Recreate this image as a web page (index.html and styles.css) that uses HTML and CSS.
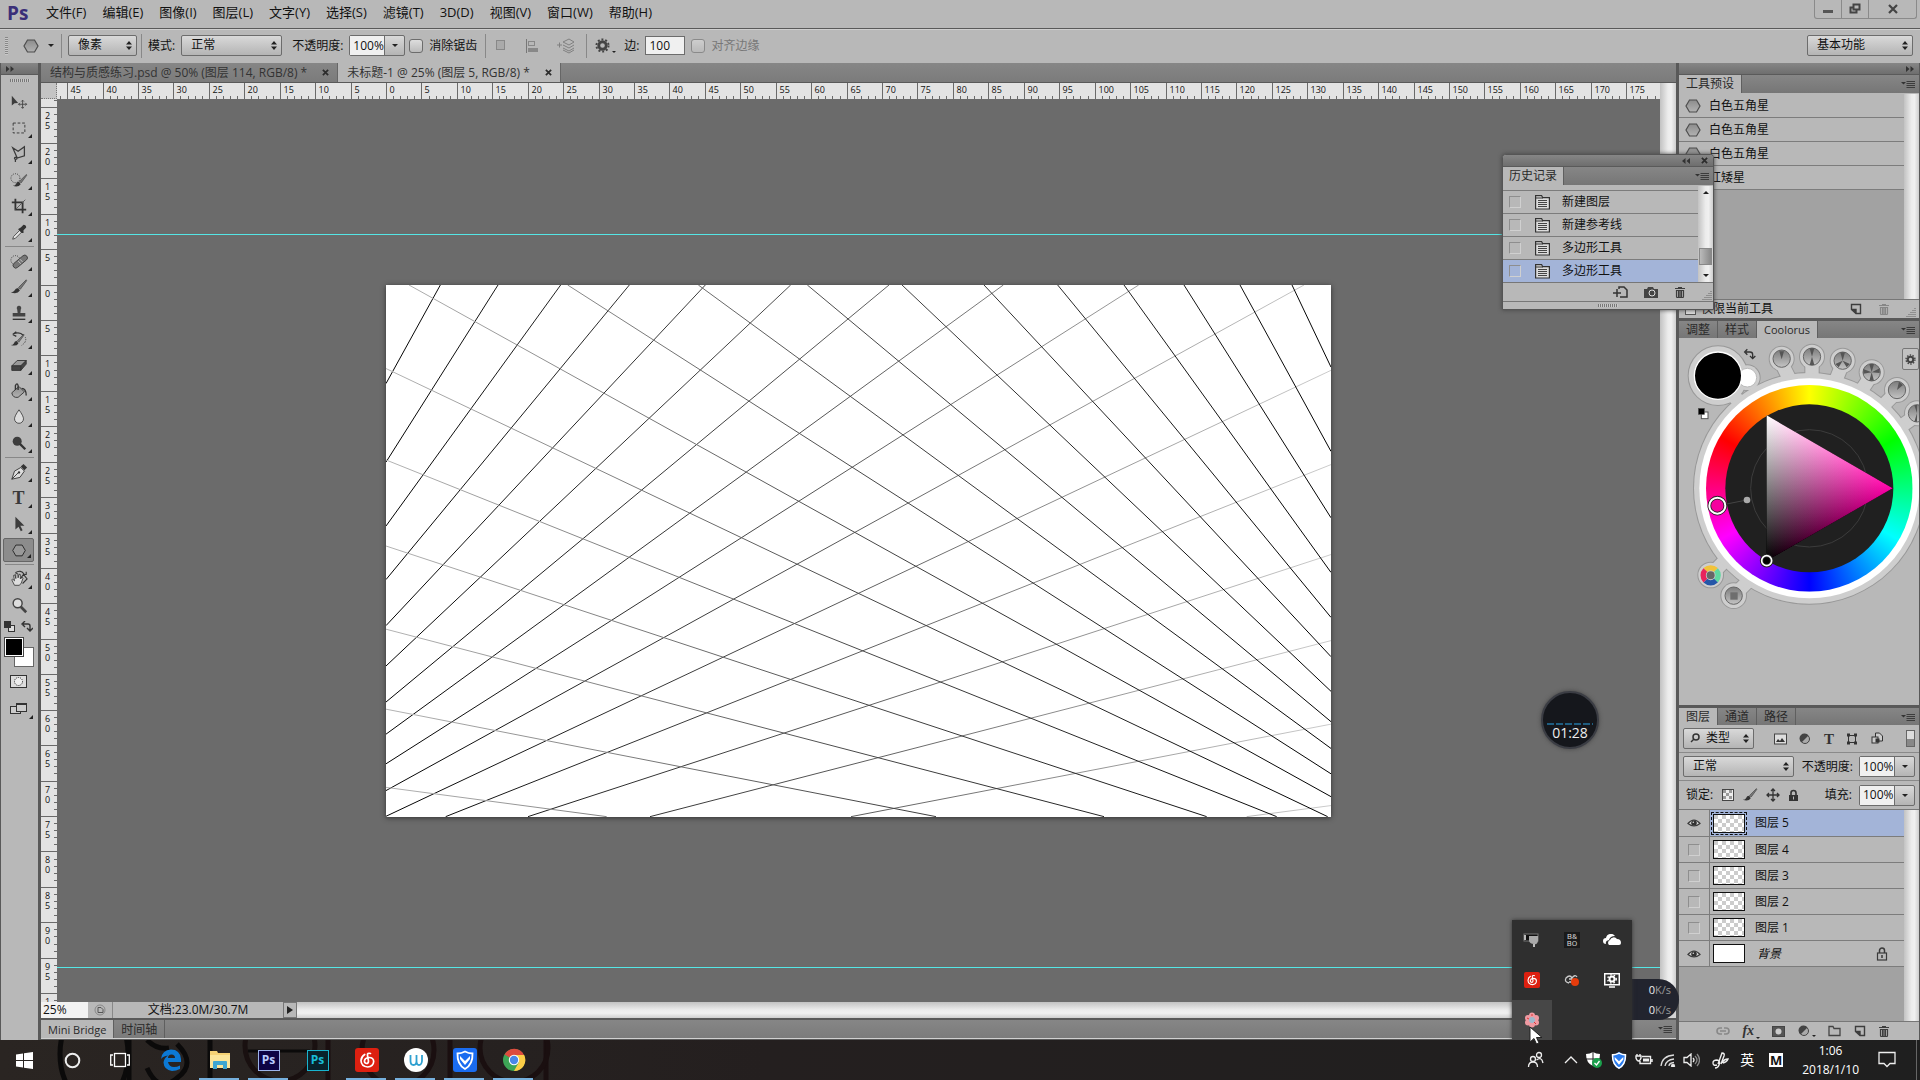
FILE: index.html
```html
<!DOCTYPE html>
<html lang="zh-CN">
<head>
<meta charset="utf-8">
<title>未标题-1 @ 25%</title>
<link rel="stylesheet" href="styles.css">
</head>
<body>
<svg class="defs" aria-hidden="true">
  <defs>
    <linearGradient id="metal" x1="0" y1="0" x2="0" y2="1"><stop offset="0" stop-color="#8c8c8c"/><stop offset="1" stop-color="#b2b2b2"/></linearGradient>
    <symbol id="hex" viewBox="0 0 16 14"><path d="M4.500 1h7L15 7l-3.500 6h-7L1 7z" fill="url(#metal)" stroke="#4d4d4d" stroke-width="1.200"/></symbol>
    <symbol id="flyout" viewBox="0 0 14 10"><path d="M0 2h5L2.500 4.500z" fill="#333"/><path d="M5.500 1.500H14M5.500 3.500H14M5.500 5.500H14M5.500 7.500H14" stroke="#3c3c3c"/></symbol>
    <symbol id="dbl" viewBox="0 0 8 6"><path d="M0 0l3.500 3L0 6zM4.500 0L8 3 4.500 6z" fill="#333"/></symbol>
    <symbol id="cross" viewBox="0 0 8 8"><path d="M1 1l6 6M7 1L1 7" stroke="#2c2c2c" stroke-width="2"/></symbol>
    <symbol id="size" viewBox="0 0 10 10"><path d="M9 0v10M7 2v8M5 4v6M3 6v4M1 8v2" stroke="#666" stroke-dasharray="1 1"/></symbol>
    <symbol id="trash" viewBox="0 0 12 12"><path d="M1 2.500h10M4 1.500h4M2 4.500h8M2.500 4v6.500q0 1 1 1h5q1 0 1-1V4M4.500 5v6M6 5v6M7.500 5v6" stroke="#3d3d3d" fill="none" stroke-width="1.200"/></symbol>
    <symbol id="newdoc" viewBox="0 0 12 12"><path d="M1.500 1.500h9v9H6L1.500 6.500zM1.500 6.500H6v4" fill="none" stroke="#3d3d3d" stroke-width="1.400"/><path d="M2 6.500h4v4z" fill="#3d3d3d"/></symbol>
    <symbol id="gear" viewBox="0 0 16 16"><circle cx="8" cy="8" r="4" fill="none" stroke="#444" stroke-width="3"/><circle cx="8" cy="8" r="6.500" fill="none" stroke="#444" stroke-width="2" stroke-dasharray="2.100 2"/></symbol>
    <symbol id="eye" viewBox="0 0 14 10"><path d="M1 5.500Q7-1.500 13 5.500 7 10.500 1 5.500z" fill="#d6d6d6" stroke="#3a3a3a" stroke-width="1.200"/><circle cx="7" cy="5" r="2.800" fill="#333"/><circle cx="6.300" cy="4.200" r=".8" fill="#ddd"/></symbol>
    <symbol id="lock" viewBox="0 0 12 14"><path d="M3.500 6V3.500a2.500 2.500 0 0 1 5 0V6" fill="none" stroke="#3a3a3a" stroke-width="1.500"/><rect x="1.500" y="6" width="9" height="7" fill="none" stroke="#3a3a3a" stroke-width="1.200"/><path d="M6 8v3" stroke="#3a3a3a" stroke-width="1.500"/></symbol>
    <symbol id="step" viewBox="0 0 15 16"><path d="M.6 15V1.600h6l1 2h6.800V15z" fill="#dcdcdc" stroke="#333" stroke-width="1.200"/><path d="M1 4h7" stroke="#333"/><path d="M3 6.500h9M3 8.500h9M3 10.500h9M3 12.500h9" stroke="#444"/></symbol>
    <symbol id="half" viewBox="0 0 12 12"><circle cx="6" cy="6" r="4.500" fill="#aaa" stroke="#444"/><path d="M2.500 9.500A5 5 0 1 1 9.500 2.500z" fill="#444"/></symbol>
    <symbol id="brush" viewBox="0 0 20 20"><path d="M18 2L9.500 10.500l2 2L18.500 3z" fill="#777" stroke="#444" stroke-width=".8"/><path d="M9 11q-3 0-4 3-1 2-4 2 7 2.500 10-2z" fill="#333"/></symbol>
    <symbol id="netease" viewBox="0 0 24 24"><rect width="24" height="24" rx="3" fill="#dd2010"/><path d="M15.500 5.500q-3.500-1-3 2l1 5.500q0 2.500-2 2.500-2.500-.500-2-3 .5-2.500 4-3 5-.200 5.200 4-.400 5-6 5.500-6.500-.600-6.700-6.500.300-4 3.700-6" fill="none" stroke="#fff" stroke-width="1.700" stroke-linecap="round"/></symbol>
    <symbol id="guard" viewBox="0 0 24 24"><path d="M4.500 5.500q4 0 7.500-2 3.500 2 7.500 2 .5 11-7.500 15.500-8-4.500-7.500-15.500z" fill="none" stroke="#fff" stroke-width="1.800"/><path d="M7 8l5 5 5-5v3l-5 6-5-6z" fill="#fff"/></symbol>
  </defs>
</svg>

<header class="menubar">
  <strong class="logo">Ps</strong>
  <nav class="menus">
    <button>文件(F)</button><button>编辑(E)</button><button>图像(I)</button><button>图层(L)</button><button>文字(Y)</button><button>选择(S)</button><button>滤镜(T)</button><button>3D(D)</button><button>视图(V)</button><button>窗口(W)</button><button>帮助(H)</button>
  </nav>
  <div class="winbtns">
    <button aria-label="最小化"><svg width="12" height="12"><rect x="1" y="7" width="10" height="3" fill="#555"/></svg></button>
    <button aria-label="还原"><svg width="12" height="12" fill="none" stroke="#444" stroke-width="2"><rect x="4.500" y="1.500" width="6" height="5"/><path d="M4 4.500H1.500v5h6V7"/></svg></button>
    <button class="wide" aria-label="关闭"><svg width="12" height="10"><path d="M2 1l8 8M10 1L2 9" stroke="#444" stroke-width="2.200"/></svg></button>
  </div>
</header>

<section class="options">
  <i class="grip-v"></i>
  <button class="tool-now" aria-label="多边形工具"><svg width="16" height="14"><use href="#hex"/></svg><i class="caret"></i></button>
  <i class="sep"></i>
  <select class="sel w-s" aria-label="工具模式"><option>像素</option></select>
  <i class="sep"></i>
  <label class="lbl" for="mode">模式:</label>
  <select id="mode" class="sel w-m"><option>正常</option></select>
  <label class="lbl lead" for="op">不透明度:</label>
  <span class="combo"><input id="op" value="100%"><button aria-label="不透明度滑块"><i class="caret"></i></button></span>
  <label class="check"><input type="checkbox">消除锯齿</label>
  <i class="sep"></i>
  <div class="paths">
    <svg width="14" height="14"><rect x="2.500" y="1.500" width="8" height="9" fill="#aaa" stroke="#888"/></svg>
    <svg width="14" height="14"><path d="M1.500 0v14" stroke="#777"/><rect x="3.500" y="2.500" width="6" height="4" fill="none" stroke="#888"/><rect x="3" y="9" width="10" height="4" fill="#888"/></svg>
    <svg width="20" height="16" fill="none" stroke="#808080"><path d="M1 7h5M3.500 4.500v5"/><path d="M7 4l6-3 5 3-5 3zM7 7l6 3 5-3M7 10l6 3 5-3M7 12l6 3 5-3"/></svg>
  </div>
  <i class="sep"></i>
  <button class="gearbtn" aria-label="几何选项"><svg width="15" height="15"><use href="#gear"/></svg><i class="caret tiny"></i></button>
  <label class="lbl" for="sides">边:</label>
  <input id="sides" class="num" value="100">
  <label class="check dim"><input type="checkbox" disabled>对齐边缘</label>
  <select class="sel w-ws" aria-label="工作区"><option>基本功能</option></select>
</section>

<main class="work">
  <aside class="tools">
    <div class="dockhead left"><svg width="8" height="6"><use href="#dbl"/></svg></div>
    <i class="grip-h"></i>
    <div class="group">
      <button aria-label="移动"><svg viewBox="0 0 20 20"><path d="M2 3v11l3-2.500 4-.5z" fill="#3c3c3c"/><path d="M14 8v9M9.500 12.500h9M12.500 9.500L14 8l1.500 1.500M12.500 15.500L14 17l1.500-1.500M11 11l-1.500 1.500L11 14M17 11l1.500 1.500L17 14" stroke="#444" fill="none"/></svg></button>
      <button class="more" aria-label="矩形选框"><svg viewBox="0 0 20 20"><rect x="3.500" y="4.500" width="13" height="11" fill="none" stroke="#333" stroke-dasharray="3 2"/></svg></button>
      <button class="more" aria-label="多边形套索"><svg viewBox="0 0 20 20"><path d="M3 3l6 4 7-5v10l-8 2.500zM8 14q-3-1-3 1 1 2 3 0M6 16v3" fill="none" stroke="#3a3a3a" stroke-width="1.400"/></svg></button>
      <button class="more" aria-label="快速选择"><svg viewBox="0 0 20 20"><circle cx="6" cy="8" r="5" fill="none" stroke="#222" stroke-dasharray="1 1.500"/><use href="#brush" x="2" y="2" width="18" height="18"/></svg></button>
      <button class="more" aria-label="裁剪"><svg viewBox="0 0 20 20"><path d="M6 2v12h12M2 6h12v12" fill="none" stroke="#333" stroke-width="2"/><path d="M6 14L17 3" stroke="#555"/></svg></button>
      <button class="more" aria-label="吸管"><svg viewBox="0 0 20 20"><path d="M3 18l1-3 7-7 2 2-7 7z" fill="#e8e8e8" stroke="#444"/><path d="M10 6l2-1 3-3q3 0 3 3l-3 3 0 3-2 0-4-4z" fill="#333"/></svg></button>
    </div>
    <hr>
    <div class="group">
      <button class="more" aria-label="修复画笔"><svg viewBox="0 0 20 20"><circle cx="6" cy="9" r="5" fill="none" stroke="#222" stroke-dasharray="1 1.500"/><rect x="2" y="8" width="19" height="6" rx="3" transform="rotate(-40 11 11)" fill="#777" stroke="#444"/><path d="M9 10l3 3M11 8l3 3" stroke="#ccc"/></svg></button>
      <button class="more" aria-label="画笔"><svg viewBox="0 0 20 20"><use href="#brush" width="20" height="20"/></svg></button>
      <button class="more" aria-label="仿制图章"><svg viewBox="0 0 20 20"><path d="M10 2a2.500 2.500 0 0 1 2 4l-.5 4H17v4H3v-4h5.500L8 6a2.500 2.500 0 0 1 2-4z" fill="#444"/><path d="M3 17h14" stroke="#333" stroke-width="1.500"/></svg></button>
      <button class="more" aria-label="历史记录画笔"><svg viewBox="0 0 20 20"><path d="M3 5q7-4 12 1M3 5l4-3M3 5l4 2" stroke="#333" stroke-width="1.500" fill="none"/><use href="#brush" y="3" width="17" height="17"/><path d="M17 8q2 5-4 9" fill="none" stroke="#333" stroke-dasharray="1 1"/></svg></button>
      <button class="more" aria-label="橡皮擦"><svg viewBox="0 0 20 20"><path d="M8 5h10l-6 6H2z" fill="#999" stroke="#333"/><path d="M2 11h10v5H2zM12 11l6-6v4l-6 7z" fill="#444" stroke="#333"/></svg></button>
      <button class="more" aria-label="油漆桶"><svg viewBox="0 0 20 20"><path d="M2 12l8-7 6 6-7 6q-6 1-7-5z" fill="url(#metal)" stroke="#333"/><path d="M6 9V4q2-4 3 0v5M13 7q5 0 5 8" fill="none" stroke="#333" stroke-width="1.500"/></svg></button>
      <button class="more" aria-label="模糊"><svg viewBox="0 0 20 20"><path d="M10 2q5 7 5 10a5 5 0 0 1-10 0q0-3 5-10z" fill="#ddd" stroke="#444"/></svg></button>
      <button class="more" aria-label="减淡"><svg viewBox="0 0 20 20"><circle cx="8" cy="8" r="5" fill="#3d3d3d"/><path d="M11 11l6 6" stroke="#333" stroke-width="2.500"/></svg></button>
    </div>
    <hr>
    <div class="group">
      <button class="more" aria-label="钢笔"><svg viewBox="0 0 20 20"><path d="M2 18L5 9l7-4 4 4-5 7zM2 18l7-7" fill="#ddd" stroke="#333"/><circle cx="10" cy="10.500" r="1.300" fill="#333"/><path d="M12 4l3-3 4 4-3 3z" fill="#333"/></svg></button>
      <button class="more letter" aria-label="文字">T</button>
      <button class="more" aria-label="路径选择"><svg viewBox="0 0 20 20"><path d="M6 2v14l3.500-3 2.500 5 2-1-2.500-5H16z" fill="#3c3c3c"/></svg></button>
      <button class="more on" aria-label="多边形"><svg viewBox="0 0 20 20"><path d="M6.500 4.500h7l3.500 6-3.500 6h-7l-3.500-6z" fill="#999" stroke="#222"/></svg></button>
    </div>
    <hr>
    <div class="group">
      <button class="more" aria-label="抓手"><svg viewBox="0 0 20 20"><path d="M5 17l-3-6 1-1 2 2-1-6 1.500-.5 1 4V4l2-.3.5 5 1-4 1.500.3v5l2-2 1 1q-2 7-4 8z" fill="#ddd" stroke="#333" stroke-width=".9"/><path d="M6 3q6-4 10 2M12 9l3-4 4 5-5 5M16 5l2 0 0-3" fill="none" stroke="#333" stroke-width="1.200"/></svg></button>
      <button aria-label="缩放"><svg viewBox="0 0 20 20"><circle cx="8.500" cy="8" r="5" fill="#ddd" stroke="#444" stroke-width="1.600"/><path d="M12 12l6 6" stroke="#444" stroke-width="3"/></svg></button>
    </div>
    <div class="mini">
      <svg width="11" height="11"><rect x="4.500" y="4.500" width="6" height="6" fill="#ddd" stroke="#333"/><rect width="7" height="7" fill="#333"/></svg>
      <svg width="12" height="11"><path d="M2 3h5q2 0 2 2v4M4 0L1 3l3 3M6 7l3 3 3-3" fill="none" stroke="#333" stroke-width="1.400"/></svg>
    </div>
    <div class="swatches"><button class="bg" aria-label="背景色"></button><button class="fg" aria-label="前景色"></button></div>
    <div class="extras">
      <button class="extra" aria-label="快速蒙版"><svg width="17" height="13"><rect x=".5" y=".5" width="16" height="12" fill="#ddd" stroke="#333"/><circle cx="8.500" cy="6.500" r="4" fill="#eee" stroke="#222" stroke-dasharray="1 1"/></svg></button>
      <button class="extra more" aria-label="屏幕模式"><svg width="18" height="14" fill="#ccc" stroke="#333"><rect x=".5" y="4.500" width="10" height="7"/><rect x="6.500" y="1.500" width="10" height="8"/><path d="M6 2h11" stroke-width="2"/></svg></button>
    </div>
  </aside>

  <section class="doc">
    <div class="doctabs">
      <button class="doctab">结构与质感练习.psd @ 50% (图层 114, RGB/8) *<svg width="7" height="7"><use href="#cross"/></svg></button>
      <button class="doctab on">未标题-1 @ 25% (图层 5, RGB/8) *<svg width="7" height="7"><use href="#cross"/></svg></button>
    </div>
    <div class="frame">
      <div class="corner"></div>
      <svg class="ruler-h" id="rulerH"></svg>
      <div class="scroll-v"></div>
      <svg class="ruler-v" id="rulerV"></svg>
      <div class="viewport">
        <svg class="artboard" id="art" viewBox="48 42 2835 1490" preserveAspectRatio="none">
          <defs>
            <linearGradient id="toRight" gradientUnits="userSpaceOnUse" x1="48" y1="0" x2="2883" y2="0"><stop offset="0" stop-color="#000"/><stop offset=".5" stop-color="#5c5c5c"/><stop offset="1" stop-color="#ccc"/></linearGradient>
            <linearGradient id="toLeft" gradientUnits="userSpaceOnUse" x1="48" y1="0" x2="2883" y2="0"><stop offset="0" stop-color="#b4b4b4"/><stop offset=".5" stop-color="#484848"/><stop offset="1" stop-color="#000"/></linearGradient>
          </defs>
          <rect x="48" y="42" width="2835" height="1490" fill="#fff"/>
          <path stroke="url(#toRight)" d="M48 318L211 42M48 538L384 42M48 717L572 42M48 867L778 42M48 996L1006 42M48 1109L1262 42M48 1210L1557 42M48 1300L1900 42M48 1383L2306 42M48 1458L2802 42M48 1530L2883 281M227 1531L2883 545M474 1531L2883 797M840 1531L2883 1038M1443 1531L2883 1272M2630 1531L2883 1500"/>
          <path stroke="url(#toLeft)" d="M48 1449L710 1531M48 1230L1698 1531M48 1006L2202 1531M48 773L2510 1531M48 532L2720 1531M48 276L2873 1531M117 42L2883 1475M593 42L2883 1411M985 42L2883 1340M1312 42L2883 1265M1596 42L2883 1180M1842 42L2883 1083M2063 42L2883 973M2262 42L2883 847M2442 42L2883 694M2610 42L2883 508M2766 42L2883 272"/>
        </svg>
        <i class="guide g1"></i><i class="guide g2"></i>
      </div>
    </div>
    <div class="status">
      <input value="25%" aria-label="缩放比例">
      <span class="sticon"><svg width="12" height="12" fill="none" stroke="#888"><circle cx="6" cy="6" r="5"/><path d="M4 3.500h3l2 2v3H4z" stroke="#555"/></svg></span>
      <span class="stinfo">文档:23.0M/30.7M</span>
      <button aria-label="更多"><svg width="7" height="8"><path d="M0 0l6 4-6 4z" fill="#222"/></svg></button>
      <div class="scroll-h"></div><i class="scorner"></i>
    </div>
    <div class="bottomtabs">
      <button class="tab on latin">Mini Bridge</button><button class="tab">时间轴</button>
      <svg class="fly" width="14" height="10"><use href="#flyout"/></svg>
    </div>
  </section>

  <aside class="dock">
    <section class="panel presets">
      <div class="dockhead right"><svg width="8" height="6"><use href="#dbl"/></svg></div>
      <div class="tabs"><button class="tab on">工具预设</button><svg class="fly" width="14" height="10"><use href="#flyout"/></svg></div>
      <div class="listwrap">
        <ul class="presetlist">
          <li><svg width="16" height="14"><use href="#hex"/></svg>白色五角星</li>
          <li><svg width="16" height="14"><use href="#hex"/></svg>白色五角星</li>
          <li><svg width="16" height="14"><use href="#hex"/></svg>白色五角星</li>
          <li><svg width="16" height="14"><use href="#hex"/></svg>红矮星</li>
        </ul>
        <div class="scroll-v"></div>
      </div>
      <div class="foot">
        <label class="only"><input type="checkbox" checked>仅限当前工具</label>
        <svg width="12" height="12"><use href="#newdoc"/></svg><svg width="12" height="12" opacity=".4"><use href="#trash"/></svg><svg class="rs" width="10" height="10"><use href="#size"/></svg>
      </div>
    </section>

    <section class="panel color">
      <div class="tabs"><button class="tab">调整</button><button class="tab">样式</button><button class="tab on latin">Coolorus</button><svg class="fly" width="14" height="10"><use href="#flyout"/></svg></div>
      <div class="wheelbox">
        <svg class="wheel" viewBox="57 84 720 1101">
          <defs>
            <g id="blobs"><circle cx="448" cy="535" r="346"/><circle cx="174" cy="197" r="88"/><circle cx="262" cy="203" r="37"/><circle cx="365" cy="146" r="36"/><circle cx="456" cy="140" r="36"/><circle cx="548" cy="152" r="36"/><circle cx="635" cy="187" r="36"/><circle cx="711" cy="240" r="36"/><circle cx="771" cy="310" r="36"/><circle cx="152" cy="795" r="37"/><circle cx="221" cy="857" r="37"/></g>
            <path id="necks" d="M200 240L300 330M365 160l30 60M456 150v60M548 160l-24 60M635 195l-40 60M711 245l-60 60M771 315l-70 50M152 795l60-60M221 857l60-60" fill="none"/>
            <linearGradient id="hueG" gradientUnits="userSpaceOnUse" x1="320" y1="0" x2="698" y2="0"><stop stop-color="#000"/><stop offset="1" stop-color="#ff00a8"/></linearGradient>
            <linearGradient id="whiteG" gradientUnits="userSpaceOnUse" x1="320" y1="316" x2="508" y2="644"><stop stop-color="#fff"/><stop offset="1" stop-color="#000"/></linearGradient>
            <linearGradient id="knobG" x1="0" y1="0" x2="0" y2="1"><stop stop-color="#7c7c7c"/><stop offset="1" stop-color="#c4c4c4"/></linearGradient>
          </defs>
          <use href="#necks" stroke="#989898" stroke-width="46"/><use href="#blobs" class="blob-line"/>
          <use href="#necks" stroke="#cecece" stroke-width="40"/><use href="#blobs" class="blob-fill"/>
          <circle cx="448" cy="535" r="330" fill="#fff"/>
          <foreignObject x="138" y="225" width="620" height="620"><div class="hue"></div></foreignObject>
          <circle cx="448" cy="535" r="252" fill="#202020"/>
          <circle cx="448" cy="535" r="176" fill="none" stroke="#3c3c3c" stroke-width="3"/>
          <g class="tri"><path d="M320 316L698 535 320 752z" fill="url(#hueG)"/><path class="plus" d="M320 316L698 535 320 752z" fill="url(#whiteG)"/></g>
          <path d="M200 582l60-12" stroke="#444" stroke-width="3"/><circle cx="261" cy="570" r="10" fill="#aaa"/>
          <circle cx="172" cy="587" r="24" fill="#f5009f" stroke="#222" stroke-width="11"/><circle cx="172" cy="587" r="24" fill="none" stroke="#fff" stroke-width="6"/>
          <circle cx="320" cy="752" r="15" fill="#000" stroke="#222" stroke-width="11"/><circle cx="320" cy="752" r="15" fill="none" stroke="#fff" stroke-width="5"/>
          <circle cx="262" cy="203" r="28" fill="#fff" stroke="#bbb" stroke-width="3"/>
          <circle cx="174" cy="197" r="71" fill="#000" stroke="#fff" stroke-width="4"/>
          <path d="M258 126h12q8 0 8 8v10M262 118l-8 8 8 8M270 138l8 8 8-8" fill="none" stroke="#333" stroke-width="4"/>
          <rect x="124" y="306" width="20" height="20" fill="#fff" stroke="#555" stroke-width="3"/><rect x="115" y="295" width="18" height="18" fill="#000" stroke="#555" stroke-width="2"/>
          <g fill="url(#knobG)" stroke="#666" stroke-width="3"><circle cx="365" cy="146" r="26"/><circle cx="456" cy="140" r="26"/><circle cx="548" cy="152" r="26"/><circle cx="635" cy="187" r="26"/><circle cx="711" cy="240" r="26"/><circle cx="771" cy="310" r="26"/><circle cx="221" cy="857" r="26"/></g>
          <path fill="#555" d="M365 148l-7-24h14zM456 140l-7-25h14zM456 140l-7 25h14zM548 152l-7-25h14zM548 152l-22 10 10 10zM548 152l22 10-10 10zM635 187l-7-25h14zM635 187l-7 25h14zM635 187l-25-10 0 14zM635 187l24-12 0 14zM711 240l6-25 12 10zM771 310l-8-25h8zM771 310l-8 25h8z"/>
          <rect x="211" y="847" width="22" height="22" fill="#6e6e6e"/>
          <circle cx="152" cy="796" r="12" fill="#666"/>
          <g fill="none" stroke-width="16"><path d="M136 780a23 23 0 0 1 32 0" stroke="#f2c33a"/><path d="M168 780a23 23 0 0 1 0 32" stroke="#5fd8a0"/><path d="M168 812a23 23 0 0 1-32 0" stroke="#2456a8"/><path d="M136 812a23 23 0 0 1 0-32" stroke="#e8235c"/></g>
        </svg>
        <button class="cgear" aria-label="设置"><svg width="11" height="11"><use href="#gear"/></svg></button>
      </div>
    </section>

    <section class="panel layers">
      <div class="tabs"><button class="tab on">图层</button><button class="tab">通道</button><button class="tab">路径</button><svg class="fly" width="14" height="10"><use href="#flyout"/></svg></div>
      <div class="lrow filter">
        <span class="kind"><svg width="10" height="10" fill="none" stroke="#333" stroke-width="1.500"><circle cx="6" cy="4" r="3"/><path d="M4 6L1 9"/></svg><select class="sel w-k" aria-label="过滤类型"><option>类型</option></select></span>
        <span class="ficons">
          <svg width="13" height="12"><rect x=".5" y="1" width="12" height="10" fill="#ddd" stroke="#444"/><path d="M2 9l2-3 2 2 2-3 3 4z" fill="#333"/></svg>
          <svg width="12" height="12"><use href="#half"/></svg>
          <b>T</b>
          <svg width="12" height="12" fill="none" stroke="#333"><rect x="2.500" y="2.500" width="7" height="7"/><path d="M1 2h3M8 2h3M1 10h3M8 10h3" stroke-width="3"/></svg>
          <svg width="12" height="13" fill="#ccc" stroke="#333"><path d="M4.500 1h4l3 3v5h-7z"/><rect x="1" y="5" width="6" height="6"/><rect x="5" y="7" width="3" height="3" fill="#333"/></svg>
        </span>
        <i class="toggle"></i>
      </div>
      <div class="lrow">
        <select class="sel w-b" aria-label="混合模式"><option>正常</option></select>
        <label class="lbl push" for="lop">不透明度:</label><span class="combo"><input id="lop" value="100%"><button aria-label="滑块"><i class="caret"></i></button></span>
      </div>
      <div class="lrow locks">
        <span class="lbl">锁定:</span>
        <svg width="12" height="12"><rect x=".5" y=".5" width="11" height="11" fill="#eee" stroke="#444"/><path d="M1 1h3v3H1zM7 1h3v3H7zM4 4h3v3H4zM1 7h3v3H1zM7 7h3v3H7z" fill="#999"/></svg>
        <svg width="16" height="16"><use href="#brush"/></svg>
        <svg width="14" height="14" fill="none" stroke="#333" stroke-width="1.300"><path d="M7 1v12M1 7h12M5 3l2-2 2 2M5 11l2 2 2-2M3 5L1 7l2 2M11 5l2 2-2 2"/></svg>
        <svg width="11" height="13"><path d="M3 6V4a2.500 2.500 0 0 1 5 0v2" fill="none" stroke="#333" stroke-width="1.600"/><rect x="1" y="6" width="9" height="6" fill="#333"/><path d="M5.500 7.500v3" stroke="#bbb"/></svg>
        <label class="lbl push" for="fill">填充:</label><span class="combo"><input id="fill" value="100%"><button aria-label="滑块"><i class="caret"></i></button></span>
      </div>
      <div class="listwrap">
        <ul class="layerlist">
          <li class="on"><span class="vis"><svg width="14" height="10"><use href="#eye"/></svg></span><span class="thumb picked"></span>图层 5</li>
          <li><span class="vis"><i></i></span><span class="thumb"></span>图层 4</li>
          <li><span class="vis"><i></i></span><span class="thumb"></span>图层 3</li>
          <li><span class="vis"><i></i></span><span class="thumb"></span>图层 2</li>
          <li><span class="vis"><i></i></span><span class="thumb"></span>图层 1</li>
          <li><span class="vis"><svg width="14" height="10"><use href="#eye"/></svg></span><span class="thumb plain"></span><em>背景</em><svg class="lk" width="12" height="14"><use href="#lock"/></svg></li>
        </ul>
        <div class="scroll-v"></div>
      </div>
      <div class="foot lfoot">
        <svg width="14" height="12" fill="none" stroke="#888" stroke-width="1.600"><path d="M6 3H4a3 3 0 0 0 0 6h2M8 3h2a3 3 0 0 1 0 6H8M4 6h6"/></svg>
        <span class="fx">fx<i class="caret tiny"></i></span>
        <svg width="13" height="11"><rect x=".5" y=".5" width="12" height="10" fill="#555" stroke="#444"/><circle cx="6.500" cy="5.500" r="3" fill="#ccc"/></svg>
        <span class="fx"><svg width="12" height="12"><use href="#half"/></svg><i class="caret tiny"></i></span>
        <svg width="13" height="12"><path d="M1 10.500v-9h4l1 2h6v7z" fill="none" stroke="#444" stroke-width="1.300"/></svg>
        <svg width="12" height="12"><use href="#newdoc"/></svg>
        <svg width="12" height="12"><use href="#trash"/></svg>
      </div>
    </section>
  </aside>
</main>

<section class="history">
  <div class="dockhead right"><svg class="flip" width="8" height="6"><use href="#dbl"/></svg><svg width="7" height="7"><use href="#cross"/></svg></div>
  <div class="tabs"><button class="tab on">历史记录</button><svg class="fly" width="14" height="10"><use href="#flyout"/></svg></div>
  <div class="listwrap">
    <ul class="steps">
      <li><i></i><svg width="15" height="16"><use href="#step"/></svg>新建图层</li>
      <li><i></i><svg width="15" height="16"><use href="#step"/></svg>新建参考线</li>
      <li><i></i><svg width="15" height="16"><use href="#step"/></svg>多边形工具</li>
      <li class="on"><i></i><svg width="15" height="16"><use href="#step"/></svg>多边形工具</li>
    </ul>
    <div class="scroll-v bar"><i class="up"></i><i class="thumbbar"></i><i class="down"></i></div>
  </div>
  <div class="foot hfoot">
    <svg width="15" height="13" fill="none" stroke="#333" stroke-width="1.500"><path d="M0 7h8M4 3v8"/><path d="M6 3V1h5l3 3v7H7"/></svg>
    <svg width="14" height="11"><path d="M0 2h3l1-2h5l1 2h4v9H0z" fill="#444"/><circle cx="8" cy="6" r="3" fill="#444" stroke="#ddd"/></svg>
    <svg width="12" height="12"><use href="#trash"/></svg><svg class="rs" width="10" height="10"><use href="#size"/></svg>
  </div>
  <div class="hgrip"><i class="grip-h"></i></div>
</section>

<div class="timer"><svg width="50" height="6"><path d="M2 3h46" stroke="#1f5d80" stroke-width="2" stroke-dasharray="7 2"/></svg>01:28</div>
<div class="speed"><span><b>0</b>K/s</span><span><b>0</b>K/s</span></div>

<div class="traypop">
  <button aria-label="设备"><svg width="18" height="16"><rect x="1" y="2" width="14" height="7" fill="#111" stroke="#777"/><path d="M6 4h9v5q-1 4-4 3-4 0-5-3z" fill="#aaa"/><path d="M2 3v5M11 12v3" stroke="#bbb" stroke-width="2"/></svg></button>
  <button class="bb" aria-label="BB">B&amp;<br>BO</button>
  <button aria-label="OneDrive"><svg width="18" height="12"><path d="M3 10a3 3 0 0 1 0-6 5 5 0 0 1 9-2q-5 0-6 4-4 1-3 4z" fill="#fff"/><path d="M6 11a3 3 0 0 1 1-5 4 4 0 0 1 7-1q4 0 4 4 0 2-2 2z" fill="#fff"/></svg></button>
  <button aria-label="云音乐"><svg width="16" height="16"><use href="#netease"/></svg></button>
  <button aria-label="创意云"><svg width="16" height="14"><path d="M5 10Q0 9 2 5q4-4 6 0 3-4 5-1M5 6h3v3H5" fill="none" stroke="#ccc" stroke-width="1.300"/><circle cx="11" cy="9" r="4" fill="#e63c0c"/></svg></button>
  <button aria-label="显示设置"><svg width="16" height="15"><path d="M.7.7h14.600v11H.7zM5 14h6" fill="none" stroke="#fff" stroke-width="1.500"/><circle cx="8" cy="6" r="2.500" fill="none" stroke="#fff" stroke-width="2"/><circle cx="8" cy="6" r="4.200" fill="none" stroke="#fff" stroke-width="1.500" stroke-dasharray="1.500 2"/></svg></button>
  <button class="hot" aria-label="花"><svg width="16" height="16"><g fill="#ef9aa2"><circle cx="8" cy="3.500" r="3"/><circle cx="12" cy="6" r="3"/><circle cx="12" cy="10.500" r="3"/><circle cx="8" cy="12.500" r="3"/><circle cx="4" cy="10.500" r="3"/><circle cx="4" cy="6" r="3"/></g><circle cx="8" cy="8" r="3" fill="#9db8cc"/><path d="M8 2v2M12 12l-2-2M3 6l2 1" stroke="#d33"/></svg></button>
</div>
<svg class="cursor" width="14" height="20"><path d="M1 1v15l4-3.500 2.500 5.500 2.500-1-2.500-5.500H13z" fill="#fff" stroke="#222"/></svg>

<footer class="taskbar">
  <svg class="wall" fill="none" stroke="#0b0a0a" stroke-width="5"><ellipse cx="94" cy="14" rx="34" ry="50"/><path d="M129-10V50M147 0q10 10 22 8M147 28q12 26 30 10 20-14 0-34M210-5V45"/><circle cx="280" cy="6" r="35" stroke="#191010"/><path d="M248 11h62" stroke="#0b0a0a" stroke-width="3"/><path d="M328-5V45M450-5V45M546-5V45" stroke="#1a0f10"/><circle cx="398" cy="10" r="36" stroke="#1a0f10"/><circle cx="514" cy="8" r="34" stroke="#1a0f10"/></svg>
  <div class="syswrap">
    <button aria-label="开始"><svg width="17" height="17" fill="#fff"><path d="M0 2.500l7-1V8H0zM8 1.300L17 0v8H8zM0 9h7v6.500l-7-1zM8 9h9v8l-9-1.300z"/></svg></button>
    <button aria-label="Cortana"><svg width="17" height="17"><circle cx="8.500" cy="8.500" r="6.800" fill="none" stroke="#eee" stroke-width="2"/></svg></button>
    <button aria-label="任务视图"><svg width="20" height="16" fill="none" stroke="#fff" stroke-width="1.300"><rect x="4.500" y="1.500" width="11" height="13"/><path d="M3 3H.7v10H3M17 3h2.300v10H17"/></svg></button>
  </div>
  <button class="app" aria-label="Edge"><svg width="22" height="22"><path d="M1 10Q2 1 11 .5q9 0 10 9.500v3H8q1 5 6 5 3 0 6-1.500V20q-4 2-8 2-8-1-8.500-8.500Q4 9 8 6.500 3 7 1 10zM8 9h7q0-3.500-3.500-3.500T8 9z" fill="#0c79d4"/></svg></button>
  <button class="app open" aria-label="资源管理器"><svg width="22" height="20"><path d="M1 1h7l1 2h12v15H1z" fill="#f5d275"/><path d="M1 5h20v13H1z" fill="#fbe59a"/><path d="M4 19v-7q0-1 1-1h12q1 0 1 1v7h-4v-4H8v4z" fill="#3ea6d2"/></svg></button>
  <button class="app open" aria-label="Photoshop"><span class="psi">Ps</span></button>
  <button class="app" aria-label="Photoshop CC"><span class="psi cc">Ps</span></button>
  <button class="app open" aria-label="网易云音乐"><svg width="24" height="24"><use href="#netease"/></svg></button>
  <button class="app open" aria-label="微云"><svg width="24" height="24"><circle cx="12" cy="12" r="12" fill="#fff"/><path d="M6.500 7v6q0 4 3 4t3-4V7M12.500 13q0 4 2.500 4t3-4V7" fill="none" stroke="#2fa0d0" stroke-width="1.800"/></svg></button>
  <button class="app open" aria-label="电脑管家"><svg width="24" height="24"><rect width="24" height="24" rx="3" fill="#1a6cf0"/><use href="#guard" width="24" height="24"/></svg></button>
  <button class="app open" aria-label="Chrome"><svg width="24" height="24"><circle cx="12" cy="12" r="11" fill="#3da556"/><path d="M12 12L2.500 6.500A11 11 0 0 1 22 7z" fill="#dd4b3e"/><path d="M12 7h10.200A11 11 0 0 1 12 23l5-9z" fill="#fccd47"/><circle cx="12" cy="12" r="5.200" fill="#fff"/><circle cx="12" cy="12" r="4.200" fill="#4a87e8"/></svg></button>
  <div class="tray">
    <svg width="18" height="18" fill="none" stroke="#eee" stroke-width="1.300"><circle cx="6" cy="8" r="2.500"/><path d="M1.500 16q0-5 4.500-5t4.500 5"/><circle cx="12" cy="4" r="2.500"/><path d="M9.500 9q5-4 6.500 3"/></svg>
    <svg class="chev" width="14" height="8" fill="none" stroke="#eee" stroke-width="1.300"><path d="M1 7l6-6 6 6"/></svg>
    <svg width="18" height="18"><path d="M1 3q4 0 7-2 3 2 7 2 0 9-7 12Q1 12 1 3z" fill="#fff"/><path d="M8 1v14M1 8h14" stroke="#222"/><circle cx="12" cy="12" r="5" fill="#1ba04c"/><path d="M9.500 12l2 2 3-4" fill="none" stroke="#fff" stroke-width="1.300"/></svg>
    <svg width="18" height="18" viewBox="2 1 20 21"><path d="M4 5q5 0 8-3 3 3 8 3 1 12-8 17Q3 17 4 5z" fill="#2a7cf0"/><use href="#guard" width="24" height="24"/></svg>
    <svg width="18" height="14" fill="none" stroke="#eee" stroke-width="1.400"><path d="M7 3.500h8.500v7H5V8M17 6v3M1 3h5v2q-1 3-2.500 3T1 5zM2 1v2M5 1v2"/><rect x="8" y="5.500" width="6" height="3" fill="#eee" stroke="none"/></svg>
    <svg width="16" height="14" fill="none" stroke="#ddd" stroke-width="1.300"><path d="M1 13Q2 3 14 2M5 13q1-6 9-7M9 13q0-3 5-3.500"/><circle cx="13" cy="13" r="1.500" fill="#fff"/></svg>
    <svg width="17" height="14" fill="none" stroke="#eee" stroke-width="1.300"><path d="M1 4.500h3L8 1v12L4 9.500H1zM10 5q2 2 0 4"/><path d="M12 3q4 4 0 8M14 1q5 6 0 12" stroke="#888"/></svg>
    <svg class="pen" width="18" height="18" fill="none" stroke="#eee" stroke-width="1.400"><path d="M6 14q-4 1-4-2t4-3q4 1 2 5-1 3-4 3M7 13l4-11q3 0 2 3L10 13M11 12q2-4 6-4-1 3-5 4"/></svg>
    <span class="ime">英</span>
    <span class="m">M</span>
    <time class="clock">1:06<br>2018/1/10</time>
    <svg class="note" width="18" height="18"><path d="M1 1.500h16v11h-5l-3 3-3-3H1z" fill="none" stroke="#eee" stroke-width="1.300"/></svg>
    <i class="desk"></i>
  </div>
</footer>
<script src="script.js"></script>
</body>
</html>
```
FILE: styles.css
```css
* { box-sizing: border-box; }
body {
  margin: 0; height: 100vh; min-width: 1100px; display: flex; flex-direction: column; overflow: hidden; position: relative;
  background: #595959; color: #111;
  font: 12px/16px "Open Sans", "Noto Sans CJK SC", sans-serif;
}
button, input, select { font: inherit; color: inherit; margin: 0; padding: 0; border: 0; background: none; border-radius: 0; }
ul { list-style: none; margin: 0; padding: 0; }
svg { display: block; flex: none; }
i { display: block; flex: none; font-style: normal; }
.defs { position: absolute; width: 0; height: 0; }

/* menu bar */
.menubar { height: 28px; flex: none; display: flex; align-items: center; background: #b8b8b8; padding: 0 3px 2px 0; }
.logo { width: 38px; padding-left: 7px; font: bold 19px/24px "Open Sans", sans-serif; color: #3a2f78; }
.menus { display: flex; flex: 1; gap: 16px; padding-left: 8px; font-size: 13px; line-height: 20px; padding-bottom: 3px; white-space: nowrap; }
.winbtns { display: flex; align-self: flex-start; height: 19px; border: 1px solid #8a8a8a; border-top: 0; border-radius: 0 0 3px 3px; }
.winbtns button { width: 27px; display: grid; place-items: center; border-right: 1px solid #8a8a8a; }
.winbtns .wide { width: 47px; border: 0; }

/* option bar */
.options { height: 34px; flex: none; display: flex; align-items: center; margin-top: 1px; padding: 0 7px 2px 5px; background: #b8b8b8; border-top: 1px solid #cfcfcf; gap: 6px; white-space: nowrap; }
.grip-v { width: 3px; height: 18px; margin-right: 9px; background: repeating-linear-gradient(#888 0 1px, #c8c8c8 1px 2px); }
.tool-now { display: flex; align-items: center; gap: 9px; margin-right: 1px; }
.caret { width: 0; height: 0; border: 3px solid transparent; border-top-color: #222; border-bottom: 0; }
.caret.tiny { border-width: 2px; border-bottom: 0; align-self: flex-end; }
.sep { width: 1px; height: 24px; background: #888; }
.sel {
  height: 21px; appearance: none; border: 1px solid #6c6c6c; border-radius: 2px; padding: 0 0 1px 9px; font-size: 12px;
  background: url("data:image/svg+xml,%3Csvg xmlns='http://www.w3.org/2000/svg' width='6' height='9'%3E%3Cpath d='M0 3.500L3 0l3 3.500zM0 5.500L3 9l3-3.500z' fill='%23222'/%3E%3C/svg%3E") no-repeat right 4px center, linear-gradient(#d9d9d9, #b4b4b4);
}
.w-s { width: 69px; margin-right: -2px; } .w-m { width: 101px; } .w-ws { width: 106px; margin-left: auto; } .w-b { width: 111px; } .w-k { width: 71px; padding-left: 22px; }
.lead { margin-left: 4px; }
.combo { display: flex; height: 21px; border: 1px solid #6c6c6c; border-radius: 2px; background: linear-gradient(#d9d9d9, #b4b4b4); }
.combo input { width: 35px; background: #f0f0f0; padding-left: 3px; border-right: 1px solid #6c6c6c; }
.combo button { width: 19px; display: grid; place-items: center; }
.check { display: flex; align-items: center; gap: 6px; margin: 0 2px 0 -2px; }
.check input { appearance: none; width: 14px; height: 14px; border: 1px solid #6c6c6c; border-radius: 3px; background: linear-gradient(#ddd, #bbb); }
.dim { color: #777; margin-left: 0; }
.dim input { opacity: .6; }
.paths { display: flex; align-items: center; gap: 17px; margin: 0 4px 0 2px; }
.gearbtn { display: flex; gap: 2px; margin: 0 2px; }
.num { width: 40px; height: 19px; background: #f0f0f0; border: 1px solid #6c6c6c; padding-left: 3px; }

/* main split */
.work { flex: 1; min-height: 0; display: flex; gap: 3px; padding: 0 1px; }
.dockhead { height: 12px; flex: none; display: flex; align-items: center; gap: 11px; padding: 0 5px; background: linear-gradient(#868686, #6e6e6e); border-bottom: 1px solid #5a5a5a; }
.dockhead.right { justify-content: flex-end; }
.flip { transform: scaleX(-1); }

.tools { width: 37px; flex: none; background: #b8b8b8; display: flex; flex-direction: column; }
.grip-h { width: 20px; height: 3px; margin: 4px auto 7px; background: repeating-linear-gradient(90deg, #777 0 1px, #c8c8c8 1px 2px); }
.tools hr { width: 29px; height: 1px; border: 0; margin: 1px auto; background: #888; }
.group { display: flex; flex-direction: column; align-items: center; padding-right: 2px; }
.group button { width: 31px; height: 26px; display: grid; place-items: center; position: relative; }
.group svg { width: 18px; height: 18px; }
.group .on { background: #8c8c8c; border: 1px solid #666; border-radius: 2px; height: 24px; margin: 1px 0; }
.more::after { content: ""; position: absolute; right: 2px; bottom: 3px; border: 2px solid transparent; border-right-color: #222; border-bottom-color: #222; }
.letter { font: bold 18px/20px "Liberation Serif", serif; color: #3a3a3a; }
.mini { display: flex; justify-content: space-between; padding: 3px 5px 5px 3px; }
.swatches { display: grid; grid-template: 10px 10px 10px / 10px 10px 10px; padding-left: 3px; }
.fg { grid-area: 1 / 1 / 3 / 3; background: #000; border: 1px solid #444; box-shadow: inset 0 0 0 1px #fff; z-index: 1; }
.bg { grid-area: 2 / 2 / 4 / 4; background: #fff; border: 1px solid #666; }
.extras { display: flex; flex-direction: column; padding: 1px 3px 0 1px; }
.extra { height: 27px; display: grid; place-items: center; position: relative; }

/* document */
.doc { flex: 1; min-width: 0; display: flex; flex-direction: column; background: #595959; }
.doctabs { height: 19px; flex: none; display: flex; background: linear-gradient(#868686, #7b7b7b); white-space: nowrap; }
.doctab { display: flex; align-items: center; gap: 15px; padding: 0 8px 0 9px; color: #333; border-right: 1px solid #666; }
.doctab.on { background: #b8b8b8; }
.frame { flex: 1; min-height: 0; margin-top: 1px; display: grid; grid-template: 16px 1fr / 16px 1fr 16px; }
.corner { background: #c4c4c4; border: dotted #777; border-width: 0 1px 1px 0; }
.ruler-h, .ruler-v { width: 100%; height: 100%; min-width: 0; min-height: 0; background: #e3e3e3; overflow: hidden; }
.ruler-h text, .ruler-v text { font: 9px "Open Sans", sans-serif; fill: #111; }
.ruler-h line, .ruler-v line { stroke: #6a6a6a; }
.scroll-v { background: linear-gradient(90deg, #c2c2c2, #ececec 50%, #f0f0f0 70%, #cfcfcf); }
.frame .scroll-v { grid-area: 1 / 3 / 3 / 4; }
.ruler-v { grid-area: 2 / 1; }
.viewport { grid-area: 2 / 2; position: relative; background: #6b6b6b; display: grid; place-items: center; overflow: hidden; }
.artboard { width: 945px; height: 532px; box-shadow: 0 1px 5px #333; fill: none; }
.artboard path { vector-effect: non-scaling-stroke; stroke-width: 1; }
.guide { position: absolute; left: 0; right: 0; height: 1px; background: #55e6e6; }
.g1 { top: 135px; } .g2 { top: 868px; }
.status { height: 16px; flex: none; display: flex; background: #b8b8b8; }
.status input { width: 47px; background: #f2f2f2; padding-left: 2px; }
.sticon { width: 25px; display: grid; place-items: center; border-right: 1px solid #888; }
.stinfo { width: 170px; text-align: center; }
.status button { width: 14px; display: grid; place-items: center; border: 1px solid #777; }
.scroll-h { flex: 1; background: linear-gradient(#c2c2c2, #ececec 50%, #f0f0f0 70%, #cfcfcf); }
.scorner { width: 16px; background: #d4d4d4; }
.bottomtabs { height: 19px; flex: none; margin: 2px 0 1px; display: flex; background: linear-gradient(#868686, #7b7b7b); border-bottom: 1px solid #d0d0d0; }
.bottomtabs .tab { padding: 1px 7px 0; }

/* panels */
.dock { width: 240px; flex: none; display: flex; flex-direction: column; gap: 3px; }
.panel { display: flex; flex-direction: column; background: #b8b8b8; }
.tabs { height: 17px; flex: none; display: flex; background: linear-gradient(#868686, #767676); }
.tab { padding: 0 7px; border-right: 1px solid #5f5f5f; color: #2a2a2a; white-space: nowrap; line-height: 16px; }
.tab.on { background: #b8b8b8; }
.latin { font-size: 11px; }
.fly { margin: 5px 4px 0 auto; }
.presets { height: 255px; }
.presets .tabs { height: 18px; }
.color { height: 384px; }
.layers { flex: 1; min-height: 0; }
.listwrap { flex: 1; min-height: 0; display: flex; background: #a2a2a2; margin-top: 1px; }
.listwrap ul { flex: 1; min-width: 0; overflow: hidden; }
.listwrap .scroll-v { width: 15px; flex: none; }
.presetlist li { height: 24px; display: flex; align-items: center; gap: 8px; padding-left: 6px; background: #b8b8b8; border-bottom: 1px solid #7c7c7c; }
.foot { height: 19px; flex: none; display: flex; align-items: center; gap: 16px; border-top: 1px solid #777; padding-right: 3px; }
.only { display: flex; align-items: center; gap: 6px; margin: 0 auto 0 6px; }
.only input { width: 11px; height: 11px; margin-right: -1px; appearance: none; border: 1px solid #555; background: #ddd; }
.rs { align-self: flex-end; }

.wheelbox { position: relative; flex: 1; overflow: hidden; }
.wheel { width: 240px; height: 367px; }
.blob-line { fill: #989898; stroke: #989898; stroke-width: 6; }
.blob-fill { fill: #cecece; }
.hue { width: 620px; height: 620px; border-radius: 50%; background: conic-gradient(#ff0, #0f0, #0ff, #00f, #f0f, #f00, #ff0); }
.tri { isolation: isolate; }
.plus { mix-blend-mode: plus-lighter; }
.cgear { position: absolute; right: 0; top: 10px; width: 17px; height: 22px; display: grid; place-items: center; border: 1px solid #777; border-radius: 2px; background: #c2c2c2; }

.lrow { height: 28px; flex: none; display: flex; align-items: center; gap: 6px; padding: 0 4px; border-bottom: 1px solid #8a8a8a; white-space: nowrap; }
.push { margin-left: auto; }
.kind { position: relative; }
.kind svg { position: absolute; left: 7px; top: 5px; }
.ficons { flex: 1; display: flex; justify-content: space-between; align-items: center; padding: 0 17px 0 14px; }
.ficons b { font: bold 15px/14px "Liberation Serif", serif; color: #333; }
.toggle { width: 9px; height: 17px; border: 1px solid #666; background: linear-gradient(#ddd 50%, #888 50%); }
.locks { height: 29px; padding-left: 7px; gap: 8px; border-bottom-color: #777; }
.locks .lbl { margin-right: 1px; }
.locks .push { margin-right: -1px; }
.layers .listwrap { margin: 0; }
.layerlist li { height: 26px; display: flex; align-items: center; background: #b8b8b8; border-bottom: 1px solid #7c7c7c; }
.layerlist .on, .steps .on { background: #a3b4d8; }
.layerlist .on { height: 27px; }
.layerlist .on .vis { background: #b8b8b8; }
.vis { width: 31px; height: 100%; flex: none; display: grid; place-items: center; border-right: 1px solid #7c7c7c; }
.vis i { width: 12px; height: 12px; border: 1px solid; border-color: #8e8e8e #d0d0d0 #d0d0d0 #8e8e8e; }
.thumb { width: 32px; height: 19px; flex: none; margin: 0 10px 0 3px; border: 1px solid #111; background: conic-gradient(#fff 25%, #ccc 0 50%, #fff 0 75%, #ccc 0) 0 0 / 8px 8px; }
.thumb.plain { background: #fff; }
.picked { outline: 1px dashed #111; outline-offset: 1px; }
.layerlist em { font-style: italic; margin-left: 2px; }
.lk { margin: 0 16px 0 auto; }
.lfoot { padding-left: 37px; gap: 0; justify-content: space-between; padding-right: 29px; }
.fx { display: flex; gap: 2px; font: italic bold 14px/16px "Liberation Serif", serif; color: #333; }

/* history */
.history { position: absolute; top: 154px; right: 206px; width: 212px; height: 156px; display: flex; flex-direction: column; background: #b8b8b8; border: 1px solid #555; border-radius: 4px 4px 0 0; overflow: hidden; box-shadow: 0 0 4px #444; }
.history .tabs { height: 18px; }
.history .tab { line-height: 18px; padding: 0 6px; }
.steps { padding-top: 4px; background: #b8b8b8; }
.steps li { height: 23px; display: flex; align-items: center; padding-left: 6px; border-top: 1px solid #7c7c7c; }
.steps i { width: 12px; height: 12px; margin-right: 14px; border: 1px solid; border-color: #8e8e8e #d0d0d0 #d0d0d0 #8e8e8e; }
.steps svg { margin-right: 12px; }
.bar { display: flex; flex-direction: column; align-items: center; padding: 5px 0; }
.up, .down { border: 3px solid transparent; border-top: 0; border-bottom-color: #222; }
.down { border-top: 3px solid #222; border-bottom: 0; margin-top: 9px; }
.thumbbar { width: 13px; height: 17px; margin-top: auto; border: 1px solid #888; background: linear-gradient(90deg, #bbb, #888); }
.hfoot { justify-content: flex-end; padding-right: 1px; }
.hgrip { height: 8px; border-top: 1px solid #777; }
.hgrip .grip-h { margin: 2px auto; }

/* floating widgets */
.timer { position: absolute; right: 321px; top: 691px; width: 58px; height: 58px; padding-top: 28px; border-radius: 50%; background: #15171c; border: 2px solid #3b3d44; color: #eee; text-align: center; font-size: 14px; line-height: 24px; display: grid; grid-template-rows: 0 1fr; justify-items: center; box-shadow: 0 0 4px #444; }
.speed { position: absolute; right: 241px; bottom: 60px; width: 70px; height: 41px; padding: 1px 8px 0 0; border-radius: 0 21px 21px 0; background: #22242e; color: #999; text-align: right; display: grid; font-size: 11px; line-height: 20px; }
.speed b { font-weight: normal; color: #eee; }
.traypop { position: absolute; right: 288px; bottom: 40px; width: 120px; height: 120px; display: grid; grid-template: repeat(3, 1fr) / repeat(3, 1fr); place-items: stretch; background: #2f2f2f; box-shadow: 0 0 4px #333; }
.traypop button { display: grid; place-items: center; color: #ccc; }
.traypop .hot { background: #474747; }
.traypop .bb { font: 8px/7px "Roboto", sans-serif; place-self: center; width: 16px; height: 16px; background: #1a1a1a; }
.cursor { position: absolute; right: 377px; bottom: 34px; z-index: 3; }

/* taskbar */
.taskbar { height: 40px; flex: none; display: flex; align-items: stretch; background: #222; position: relative; color: #fff; }
.taskbar button { display: grid; place-items: center; position: relative; }
.wall { position: absolute; inset: 0; width: 100%; height: 100%; background: linear-gradient(90deg, #2a2522, #241f1f 40%, #1f1f1f); }
.syswrap { display: flex; padding-right: 2px; }
.syswrap button { width: 48px; }
.app { width: 49px; }
.open::after { content: ""; position: absolute; left: 4px; right: 5px; bottom: 0; height: 2px; background: #76b0dd; }
.psi { width: 22px; height: 21px; border: 1px solid #9db4ea; background: #0d0445; color: #b9ccff; font: bold 12px/18px "Open Sans", sans-serif; }
.cc { border-color: #18b4cf; background: #08222c; color: #19bcd8; }
.tray { margin-left: auto; display: flex; align-items: center; gap: 7px; position: relative; }
.chev { margin-left: 12px; }
.pen { margin-left: 4px; }
.ime { font-size: 14px; line-height: 20px; margin: 0 8px 0 4px; }
.m { width: 14px; height: 14px; background: #fff; color: #111; font: bold 13px/14px "Open Sans", sans-serif; text-align: center; }
.clock { text-align: center; line-height: 19px; margin: 0 12px; }
.desk { width: 4px; height: 40px; border-left: 1px solid #666; margin-left: 13px; }
```
FILE: script.js
```js
// Draws the ruler ticks and numbers so that zero sits on the artboard's top-left corner.
const UNIT = 7.0866;
const NS = "http://www.w3.org/2000/svg";

function add(svg, tag, attrs, text) {
  const el = document.createElementNS(NS, tag);
  for (const k in attrs) el.setAttribute(k, attrs[k]);
  if (text !== undefined) el.textContent = text;
  svg.appendChild(el);
}

function drawRulers() {
  const art = document.getElementById("art").getBoundingClientRect();
  const h = document.getElementById("rulerH");
  const v = document.getElementById("rulerV");
  const hb = h.getBoundingClientRect();
  const vb = v.getBoundingClientRect();
  h.textContent = "";
  v.textContent = "";
  for (let n = -80; n < 260; n++) {
    const x = Math.round(art.left - hb.left + n * UNIT) + 0.5;
    const y = Math.round(art.top - vb.top + n * UNIT) + 0.5;
    const major = n % 5 === 0;
    if (x > 0 && x < hb.width) {
      add(h, "line", { x1: x, x2: x, y1: major ? 0 : 13, y2: 16 });
      if (major) add(h, "text", { x: x + 3, y: 10 }, Math.abs(n));
    }
    if (y > 0 && y < vb.height) {
      add(v, "line", { y1: y, y2: y, x1: major ? 0 : 13, x2: 16 });
      if (major) String(Math.abs(n)).split("").forEach((d, i) => {
        if (y + 4 + i * 10 < vb.height) add(v, "text", { x: 4, y: y + 11 + i * 10 }, d);
      });
    }
  }
}
drawRulers();
window.addEventListener("resize", drawRulers);
```
